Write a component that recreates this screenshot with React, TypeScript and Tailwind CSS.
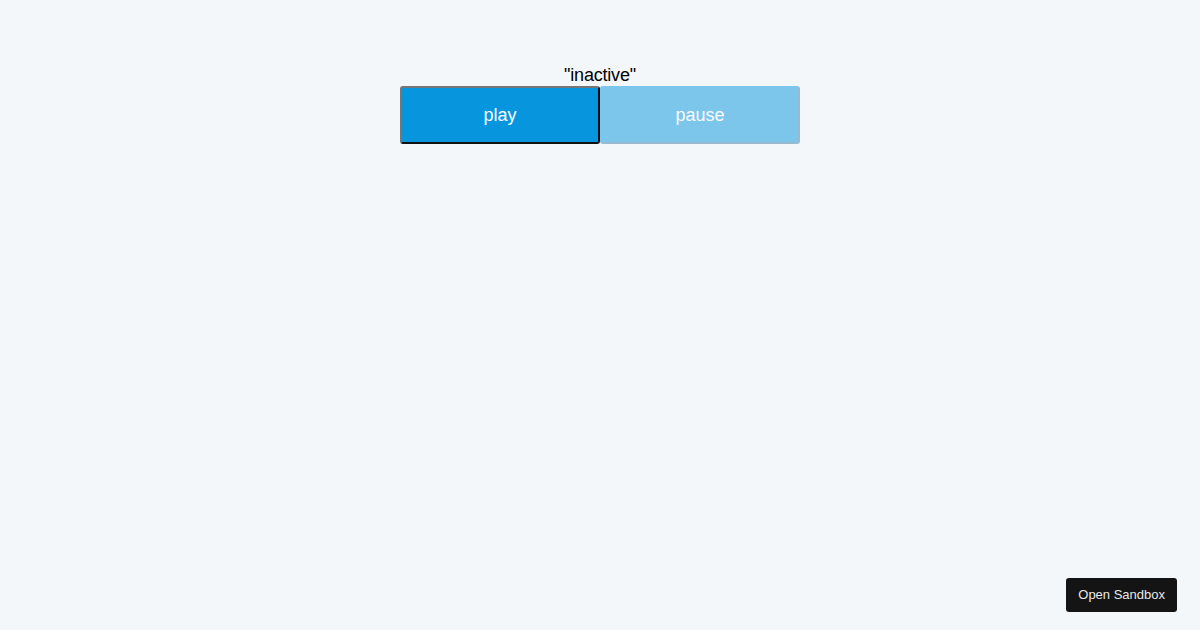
import React from 'react';

export default function App() {
  return (
    <div className="relative w-[1200px] h-[630px] bg-[#f4f7fa] font-['Liberation_Sans',Arial,sans-serif] text-black">
      <div className="flex flex-col items-center pt-[64px]">
        <div className="text-[18px] leading-[22px] tracking-[-0.2px]">"inactive"</div>
        <div className="flex">
          <button className="w-[200px] h-[58px] bg-[#0795dd] text-white text-[18px] rounded-[3px] border-2 border-t-[#767676] border-l-[#767676] border-b-[#111] border-r-[#111]">
            play
          </button>
          <button
            disabled
            className="w-[200px] h-[58px] bg-[#0795dd] text-white text-[18px] rounded-[3px] border-2 border-t-[#0795dd] border-l-[#0795dd] border-b-[#3d7ea6] border-r-[#3d7ea6] opacity-50"
          >
            pause
          </button>
        </div>
      </div>
      <button className="absolute right-[23px] bottom-[18px] h-[34px] px-[12px] rounded-[3px] bg-[#141414] text-[#e8e8e8] text-[13px]">
        Open Sandbox
      </button>
    </div>
  );
}
